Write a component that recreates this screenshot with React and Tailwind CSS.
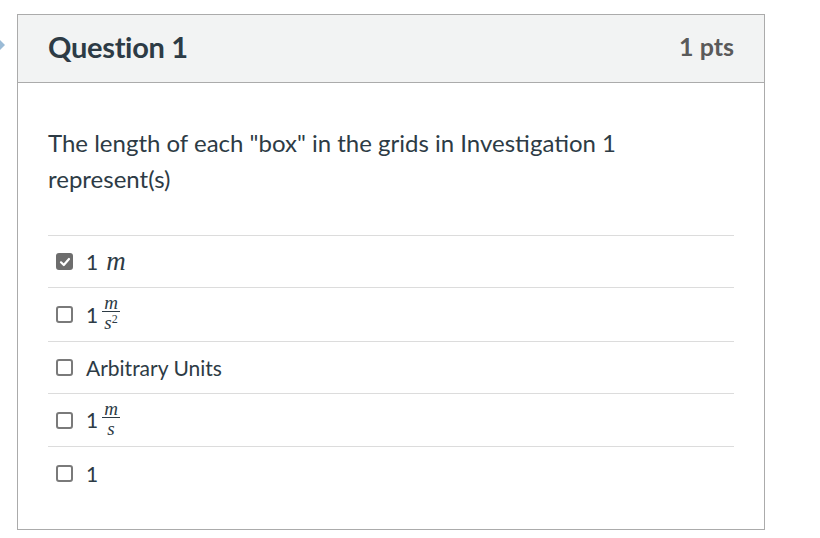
import React, { useState } from 'react';

const Check = ({ checked, onClick }) => (
    <button
        onClick={onClick}
        className={`w-[17px] h-[17px] rounded-[3px] flex items-center justify-center shrink-0 ${checked ? 'bg-[#6d6d6d] border-2 border-[#6d6d6d]' : 'bg-white border-2 border-[#7a7a7a]'}`}
    >
        {checked && (
            <svg width="12" height="12" viewBox="0 0 12 12">
                <path d="M2 6.3 L4.8 9 L10 3" fill="none" stroke="white" strokeWidth="2.2" strokeLinecap="round" strokeLinejoin="round" />
            </svg>
        )}
    </button>
);

const serif = { fontFamily: '"Liberation Serif", "DejaVu Serif", serif' };

const MathM = () => (
    <span className="italic text-[27px] leading-none" style={serif}>m</span>
);

const Frac = ({ den }) => (
    <span className="inline-flex flex-col items-center ml-[4px] -mt-[3px]" style={serif}>
        <span className="italic text-[19px] leading-[17px] px-[2px] border-b border-[#2d3b45]">m</span>
        <span className="italic text-[19px] leading-[19px] pt-[1px] flex items-start">{den}</span>
    </span>
);

const App = () => {
    const [selected, setSelected] = useState(0);

    const answers = [
        { key: 0, label: <span className="flex items-baseline gap-[8px]">1<MathM /></span>, h: 'h-[52px]' },
        { key: 1, label: <span className="flex items-center">1<Frac den={<><span>s</span><span className="text-[12px] leading-[12px] not-italic">2</span></>} /></span>, h: 'h-[54px]' },
        { key: 2, label: <span>Arbitrary Units</span>, h: 'h-[52px]' },
        { key: 3, label: <span className="flex items-center">1<Frac den="s" /></span>, h: 'h-[53px]' },
        { key: 4, label: <span>1</span>, h: 'h-[53px]', last: true },
    ];

    return (
        <div className="w-[820px] h-[538px] bg-white flex pt-[14px] text-[#2d3b45]" style={{ fontFamily: 'Lato, "Liberation Sans", sans-serif' }}>
            <div className="w-[17px] shrink-0 pt-[25px]">
                <svg width="6" height="12" viewBox="0 0 6 12">
                    <path d="M0 1 L5 6 L0 11 Z" fill="#9bbbd6" />
                </svg>
            </div>
            <div className="w-[748px] h-[516px] border border-[#ababab] flex flex-col">
                <div className="h-[68px] bg-[#f2f3f3] border-b border-[#ababab] flex items-center justify-between pl-[30px] pr-[30px] pb-[4px]">
                    <h2 className="text-[29px] font-bold tracking-[-0.3px]">Question 1</h2>
                    <span className="text-[25px] font-bold text-[#5a5a5a]">1 pts</span>
                </div>
                <div className="px-[30px] pt-[42px]">
                    <p className="text-[24px] leading-[36px]">
                        The length of each "box" in the grids in Investigation 1<br />represent(s)
                    </p>
                    <div className="mt-[38px] border-t border-[#dcdcdc]">
                        {answers.map((a) => (
                            <div
                                key={a.key}
                                className={`${a.h} flex items-center gap-[13px] pl-[8px] text-[21px] ${a.last ? '' : 'border-b border-[#dcdcdc]'}`}
                            >
                                <Check checked={selected === a.key} onClick={() => setSelected(a.key)} />
                                {a.label}
                            </div>
                        ))}
                    </div>
                </div>
            </div>
        </div>
    );
};

export default App;
